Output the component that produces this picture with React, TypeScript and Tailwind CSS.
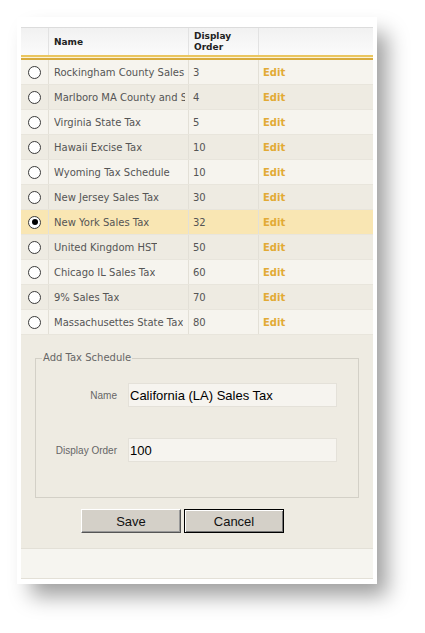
import { useState } from 'react';

const rows = [
  { name: 'Rockingham County Sales Tax', order: 3 },
  { name: 'Marlboro MA County and State Tax', order: 4 },
  { name: 'Virginia State Tax', order: 5 },
  { name: 'Hawaii Excise Tax', order: 10 },
  { name: 'Wyoming Tax Schedule', order: 10 },
  { name: 'New Jersey Sales Tax', order: 30 },
  { name: 'New York Sales Tax', order: 32 },
  { name: 'United Kingdom HST', order: 50 },
  { name: 'Chicago IL Sales Tax', order: 60 },
  { name: '9% Sales Tax', order: 70 },
  { name: 'Massachusettes State Tax', order: 80 },
];

export default function App() {
  const [selected, setSelected] = useState(6);
  const [name, setName] = useState('California (LA) Sales Tax');
  const [order, setOrder] = useState('100');

  return (
    <div className="w-[425px] h-[633px] bg-white pt-[17px] pl-[17px] font-['DejaVu_Sans',sans-serif]">
      <div className="w-[360px] bg-white pt-[10px] px-[4px] pb-[5px] shadow-[12px_14px_20px_-2px_rgba(0,0,0,0.38)]">
        {/* Grid header */}
        <div className="grid grid-cols-[28px_140px_70px_114px] h-[28px] border-t border-[#dcdcdc] bg-gradient-to-b from-[#f1f1f1] to-[#fbfbfb] text-[9px] font-bold text-[#222] leading-[11px]">
          <div className="border-r border-[#e2e2e2]" />
          <div className="border-r border-[#e2e2e2] flex items-center pl-[5px] pt-[2px]">Name</div>
          <div className="border-r border-[#e2e2e2] flex items-center pl-[5px] pt-[1px]">Display<br />Order</div>
          <div />
        </div>
        <div className="h-[2px] bg-[#eac660]" />
        <div className="h-[1px] bg-[#fbf3da]" />
        <div className="h-[2px] bg-[#d9ac3e]" />

        {/* Grid rows */}
        {rows.map((r, i) => (
          <div
            key={r.name}
            onClick={() => setSelected(i)}
            className={
              'grid grid-cols-[28px_140px_70px_114px] h-[25px] border-b border-[#e8e5dc] text-[10px] text-[#555] cursor-pointer ' +
              (i === selected ? 'bg-[#f9e6b3]' : i % 2 === 0 ? 'bg-[#f6f4ee]' : 'bg-[#eeebe2]')
            }
          >
            <div className="border-r border-[#e3e0d7] flex items-center justify-center">
              <span className="w-[13px] h-[13px] rounded-full border border-[#3a3a3a] bg-white flex items-center justify-center">
                {i === selected && <span className="w-[6px] h-[6px] rounded-full bg-black" />}
              </span>
            </div>
            <div className="border-r border-[#e3e0d7] flex items-center pl-[5px] pr-[3px] min-w-0">
              <div className="overflow-hidden whitespace-nowrap">{r.name}</div>
            </div>
            <div className="border-r border-[#e3e0d7] flex items-center pl-[4px]">{r.order}</div>
            <div className="flex items-center pl-[4px] font-bold text-[#e2aa35]">Edit</div>
          </div>
        ))}

        {/* Add form */}
        <div className="bg-[#eeebe2] pt-[17px] px-[14px] pb-[15px]">
          <fieldset className="border border-[#d3d0c7] px-0">
            <legend className="ml-[6px] px-[1px] text-[10px] leading-[12px] text-[#666]">Add Tax Schedule</legend>
            <div className="pt-[19px] pb-[35px] flex flex-col gap-[31px]">
              <div className="flex items-center">
                <label className="w-[81px] text-right text-[10px] text-[#666] font-['Liberation_Sans',sans-serif]">Name</label>
                <input
                  value={name}
                  onChange={(e) => setName(e.target.value)}
                  className="ml-[11px] w-[209px] h-[24px] bg-[#f6f4ef] border border-[#e4e1d9] pl-[1px] text-[13px] text-black font-['Liberation_Sans',sans-serif] outline-none"
                />
              </div>
              <div className="flex items-center">
                <label className="w-[81px] text-right text-[10px] text-[#666] font-['Liberation_Sans',sans-serif]">Display Order</label>
                <input
                  value={order}
                  onChange={(e) => setOrder(e.target.value)}
                  className="ml-[11px] w-[209px] h-[24px] bg-[#f6f4ef] border border-[#e4e1d9] pl-[1px] text-[13px] text-black font-['Liberation_Sans',sans-serif] outline-none"
                />
              </div>
            </div>
          </fieldset>

          <div className="mt-[11px] pl-[46px] flex gap-[3px] font-['Liberation_Sans',sans-serif] text-[13px] text-[#111]">
            <button className="w-[100px] h-[24px] pt-[1px] bg-[#d4d0c8] border border-t-white border-l-white border-r-[#555] border-b-[#555] shadow-[inset_-1px_-1px_0_#999]">
              Save
            </button>
            <button className="w-[100px] h-[24px] pt-[1px] bg-[#d4d0c8] border border-black shadow-[inset_1px_1px_0_#fff,inset_-1px_-1px_0_#777]">
              Cancel
            </button>
          </div>
        </div>

        {/* Footer */}
        <div className="h-[31px] bg-[#f6f5f0] border-t border-[#e3e0d7] border-b border-[#dddad2]" />
      </div>
    </div>
  );
}
